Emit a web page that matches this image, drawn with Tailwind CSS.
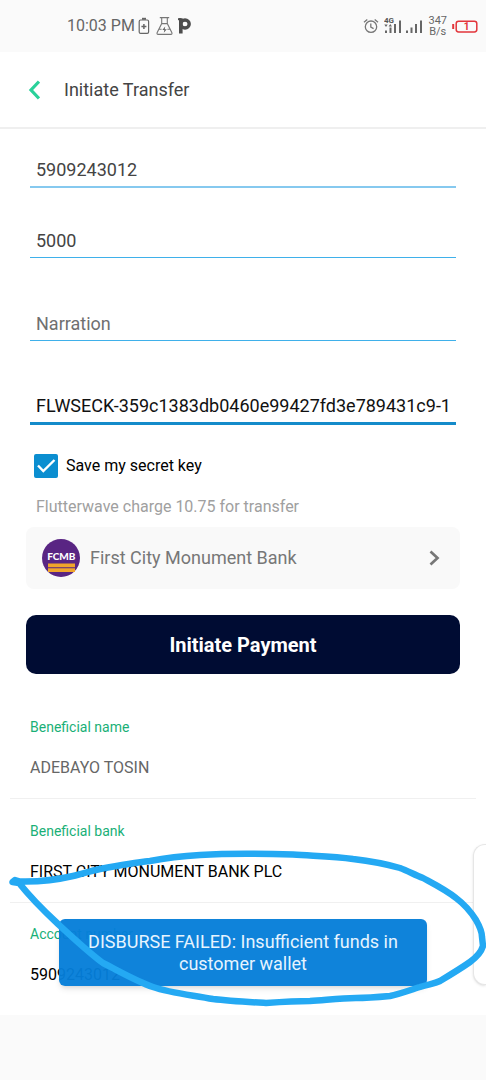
<!DOCTYPE html>
<html lang="en">
<head>
<meta charset="utf-8">
<meta name="viewport" content="width=device-width, initial-scale=1">
<title>Initiate Transfer</title>
<script src="https://cdn.jsdelivr.net/npm/@tailwindcss/browser@4"></script>
</head>
<body class="min-h-screen overflow-x-hidden bg-[#fafafa] font-[Roboto,sans-serif] text-[#444]">
  <div class="flex h-[52px] items-center justify-between pr-2 pl-[67px] text-[#666]">
    <div class="flex items-center">
      <span class="text-base">10:03 PM</span>
      <svg class="ml-[3px] h-[18px] w-3" viewBox="0 0 12 18" fill="none" stroke="#666" stroke-width="1.2" aria-hidden="true">
        <rect x="1.2" y="3" width="9.4" height="13.4" rx="1.4"/><path d="M4 1.8h4" stroke-width="2"/><path d="M5.9 7v5M3.4 9.5h5" stroke-width="1.5"/>
      </svg>
      <svg class="ml-1.5 h-5 w-[17px]" viewBox="0 0 17 20" fill="none" stroke="#777" stroke-width="1.1" aria-hidden="true">
        <path d="M3.8 1.6h9.4M5.7 1.6v6L1.1 16.8q-.4 1.6 1 1.6h12.8q1.4 0 1-1.6L11.300 7.600v-6M5.700 7.600h5.600M3 13.200h2.600M11.400 13.200h2.600"/><path d="M9.200 10.600L6.300 14h2l-.5 2.800 3-3.600h-2z" fill="#666" stroke="none"/>
      </svg>
      <svg class="ml-[5px] h-[18px] w-[13px]" viewBox="0 0 13 18" fill="none" stroke="#4d4d4d" aria-hidden="true">
        <path d="M0 2.200h3" stroke-width="2"/><path d="M2.800 1.200v15.300" stroke-width="3.600"/><ellipse cx="7" cy="7" rx="4.200" ry="4" stroke-width="3.400"/>
      </svg>
    </div>
    <div class="flex items-center">
      <svg class="h-4 w-4" viewBox="0 0 16 16" fill="none" stroke="#777" stroke-width="1.300" aria-hidden="true">
        <circle cx="8" cy="8.700" r="5.700"/><path d="M1 4.300L4.300 1.500M15 4.300L11.700 1.500M7.800 5.500v3.600l2.800 1.500"/>
      </svg>
      <svg class="ml-[5px] h-5 w-[38px]" viewBox="0 0 38 20" aria-hidden="true">
        <g fill="#666"><path d="M1 14.500h2V17H1zM5.500 11.500h2V17h-2zM10 8h2v9h-2zM15 4.500h2V17h-2zM22 14.500h2V17h-2zM26.500 11.500h2V17h-2zM31 8h2v9h-2zM36 4.500h2V17h-2z"/><path d="M.3 8.500h3.400L2 11zM4.600 10.500H8L6.300 8z"/></g>
        <text x="0" y="7" font-size="8" font-weight="700" fill="#555">4G</text>
      </svg>
      <span class="ml-1.5 text-center text-[11px] leading-[11px]">347<br>B/s</span>
      <svg class="ml-[5px] h-[13px] w-[26px]" viewBox="0 0 26 13" fill="none" stroke="#e2353b" aria-hidden="true">
        <path d="M1.200 4v5" stroke-width="2"/><rect x="4.200" y="1.200" width="20.600" height="10.800" rx="2.400" stroke-width="1.500"/>
        <text x="14.500" y="10" text-anchor="middle" font-size="10" font-weight="700" fill="#e2353b" stroke="none">1</text>
      </svg>
    </div>
  </div>

  <div class="bg-white">
    <header class="flex h-[77px] items-center border-b-2 border-[#efefef] pl-7">
      <button type="button" aria-label="Back" class="mr-6 flex">
        <svg class="h-5 w-3" viewBox="0 0 12 20" fill="none" stroke="#2ad19a" stroke-width="3.200" aria-hidden="true"><path d="M11 1.500L3 10l8 8.500"/></svg>
      </button>
      <h1 class="text-lg">Initiate Transfer</h1>
    </header>

    <form class="px-[26px] pt-[29px]">
      <div class="flex flex-col px-1 text-lg">
        <input type="text" aria-label="Account number" value="5909243012" class="h-[30px] border-b-2 border-[#86c9ef] px-1.5 pb-[5px] outline-none">
        <input type="text" aria-label="Amount" value="5000" class="mt-10 h-[30px] border-b border-[#3fb0ea] px-1.5 pb-[5px] outline-none">
        <input type="text" aria-label="Narration" placeholder="Narration" class="mt-[53px] h-[30px] border-b border-[#3fb0ea] px-1.5 pb-[5px] outline-none placeholder:text-[#707070]">
        <input type="text" aria-label="Secret key" value="FLWSECK-359c1383db0460e99427fd3e789431c9-1" class="mt-[53px] h-[31px] border-b-3 border-[#148bca] pb-[5px] pl-1.5 text-[#111] outline-none">
      </div>
      <label class="mt-[29px] ml-2 flex items-center gap-2 text-base text-black">
        <span class="grid">
          <input type="checkbox" checked class="peer col-start-1 row-start-1 h-6 w-6 appearance-none rounded-xs border-2 border-[#0b8ed0] checked:bg-[#0b8ed0]">
          <svg class="pointer-events-none invisible col-start-1 row-start-1 h-6 w-6 peer-checked:visible" viewBox="0 0 24 24" fill="none" stroke="#fff" stroke-width="2.400" aria-hidden="true"><path d="M4 11.500l5.300 5.500L20.500 6"/></svg>
        </span>
        Save my secret key
      </label>
      <p class="mt-[17px] ml-2.5 text-base leading-6 text-[#a0a0a0]">Flutterwave charge 10.75 for transfer</p>
      <button type="button" class="mt-2 flex h-[62px] w-full items-center rounded-lg bg-[#f9f9f9] pr-5 pl-4 text-left text-[#777]">
        <svg class="mr-2.5 h-[38px] w-[38px]" viewBox="0 0 38 38" aria-hidden="true">
          <circle cx="19" cy="19" r="19" fill="#592583"/>
          <text x="19.300" y="21" text-anchor="middle" font-family="Lato, sans-serif" font-size="10" font-weight="900" fill="#fff">FCMB</text>
          <path d="M6 24.500h27v3.800H6zM6 29.200h27v3.800H6z" fill="#f0a52b"/>
        </svg>
        <span class="flex-1 text-lg">First City Monument Bank</span>
        <svg class="h-4 w-[11px]" viewBox="0 0 11 16" fill="none" stroke="#777" stroke-width="2.700" aria-hidden="true"><path d="M1.500 1.500L8.500 8l-7 6.500"/></svg>
      </button>
      <button type="button" class="mt-[26px] h-[59px] w-full rounded-[10px] bg-[#000c33] text-xl font-bold text-white">Initiate Payment</button>
    </form>

    <section class="relative mt-[21px]">
      <dl class="px-2.5 text-base leading-5">
        <div class="border-b border-[#f0f0f0] px-5 pt-[22px] pb-5">
          <dt class="text-sm leading-5 text-[#19b077]">Beneficial name</dt>
          <dd class="mt-[21px] text-[#666]">ADEBAYO TOSIN</dd>
        </div>
        <div class="border-b border-[#f0f0f0] px-5 pt-[22px] pb-5">
          <dt class="text-sm leading-5 text-[#19b077]">Beneficial bank</dt>
          <dd class="mt-[21px] text-black">FIRST CITY MONUMENT BANK PLC</dd>
        </div>
        <div class="px-5 pt-[21px] pb-[30px]">
          <dt class="text-sm leading-5 text-[#19b077]">Account number</dt>
          <dd class="mt-[21px] text-black">5909243012</dd>
        </div>
      </dl>
      <div class="absolute right-0 bottom-[30px] h-[141px] w-[13px] rounded-l-xl border border-r-0 border-[#e6e6e6] bg-white shadow-sm"></div>
      <div role="alert" class="absolute inset-x-[59px] bottom-[29px] rounded-md bg-[#057ed8]/96 px-5 pt-3 pb-[11px] text-center text-lg leading-[22px] text-[#e6f4ff] shadow-md">DISBURSE FAILED: Insufficient funds in customer wallet</div>
      <svg class="pointer-events-none absolute bottom-0 left-0 h-[175px] w-full" viewBox="0 840 486 175" preserveAspectRatio="none" fill="none" stroke="#24a9f3" stroke-width="6.500" stroke-linecap="round" stroke-linejoin="round" aria-hidden="true">
        <path d="M12.500 882L15 880L20 881.500C38 882 56 880 73 876C82 874 90 871 100 869C116 866 132 863 150 861C166 858 184 856 200 855C230 853 263 853.500 293 854.500C313 856 334 856 353 859C370 861 386 864 400 868C408 871 415 875 423 878C436 885 446 890 456 898C464 904 471 912 476 920C480 927 482 931 482 937L483 946C481 953 477 957 470 962C460 969 450 975 440 981C434 984 429 984 420 987C410 990 400 994 390 996C379 997 368 998 356 998C341 998 326 1000 310 1001C295 1001 280 1002 266 1003C248 1002 229 1001 213 999C192 995 170 993 153 987C136 981 119 971 103 963C87 951 71 936 57 923C43 910 31 898 19 883Z"/>
      </svg>
    </section>
  </div>
</body>
</html>
